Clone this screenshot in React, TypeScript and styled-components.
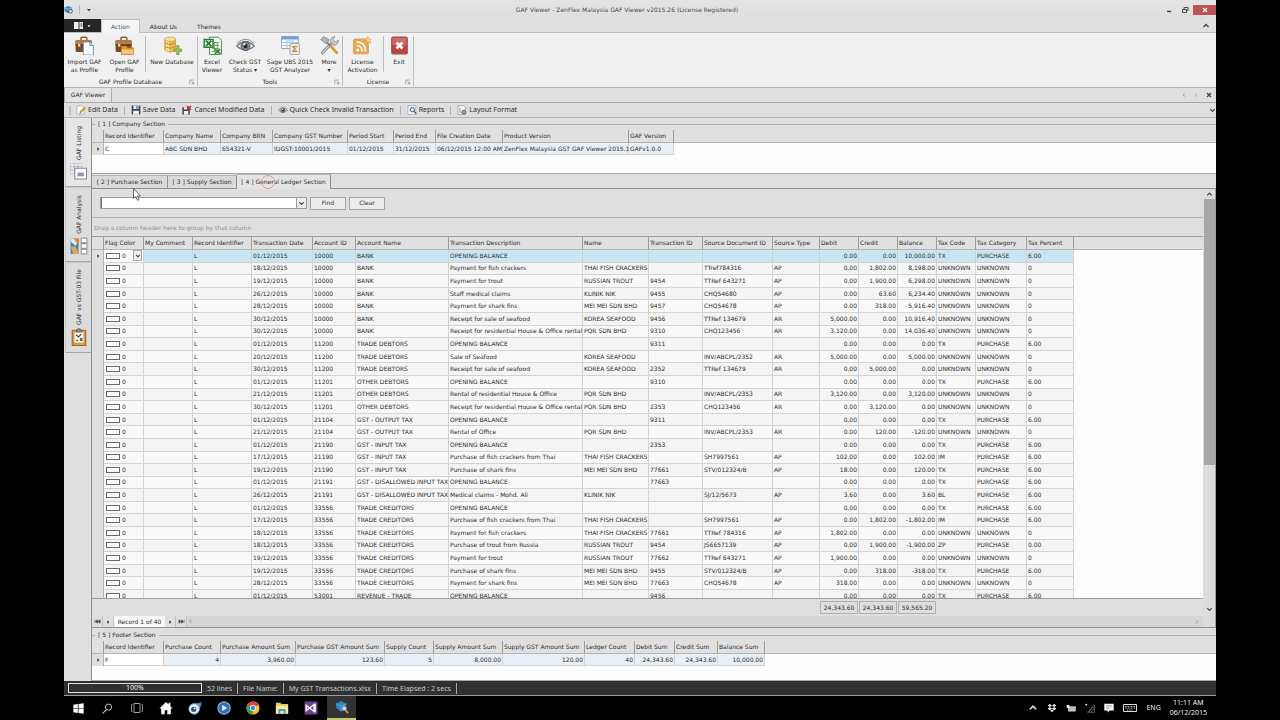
import React from "react";
import styled, { createGlobalStyle, css } from "styled-components";

const GlobalStyle = createGlobalStyle`
  * { box-sizing: border-box; }
  html, body { margin: 0; padding: 0; background: #000; }
  body, button, input, table { font-family: "DejaVu Sans", Verdana, sans-serif; font-size: 6px; line-height: 8px; color: #2c2c2c; }
  button { border: 0; padding: 0; margin: 0; background: none; }
  svg { display: block; }
`;

const segoe = `"Noto Sans", "Open Sans", sans-serif`;

const Screen = styled.div`
  display: flex;
  flex-direction: column;
  height: 100vh;
  padding: 0 5%;
  background: #000;
`;

const Window = styled.div`
  display: flex;
  flex-direction: column;
  flex: 1;
  min-height: 0;
  background: #dfdfdf;
`;

/* ---------- title bar ---------- */

const TitleBar = styled.header`
  display: grid;
  grid-template-columns: 1fr auto 1fr;
  align-items: center;
  height: 19px;
  flex: none;
  background: linear-gradient(#e4e4e4, #dedede);
`;

const QuickAccess = styled.div`
  display: flex;
  align-items: center;
  gap: 5px;
`;

const QuickSeparator = styled.span`
  width: 1px;
  height: 9px;
  background: #b5b5b5;
`;

const Title = styled.h1`
  margin: 0;
  padding-right: 26px;
  font-size: 6px;
  font-weight: 400;
  color: #484848;
`;

const WindowButtons = styled.div`
  display: flex;
  justify-content: flex-end;
  align-items: center;
`;

const WindowButton = styled.button<{ $close?: boolean }>`
  display: grid;
  place-items: center;
  width: ${(p) => (p.$close ? 23 : 16)}px;
  height: 10px;
  background: ${(p) => (p.$close ? "#bd5353" : "transparent")};
`;

/* ---------- ribbon ---------- */

const RibbonTabs = styled.nav`
  display: flex;
  height: 14px;
  flex: none;
  border-bottom: 1px solid #bdbdbd;
`;

const FileButton = styled.button`
  display: flex;
  align-items: center;
  justify-content: center;
  gap: 3px;
  width: 37px;
  height: 13px;
  background: #262626;
`;

const RibbonTab = styled.button<{ $active?: boolean }>`
  height: 14px;
  padding: 0 9px;
  border: 1px solid transparent;
  border-bottom: 0;
  ${(p) =>
    p.$active &&
    css`
      background: #f4f4f4;
      border-color: #bdbdbd;
      color: #3a5a86;
    `}
`;

const RibbonToggle = styled.button`
  margin-left: auto;
  padding-right: 6px;
`;

const Ribbon = styled.div`
  display: flex;
  height: 55px;
  flex: none;
  padding-top: 3px;
  background: #f0f0f0;
  border-bottom: 1px solid #b4b4b4;
`;

const RibbonGroup = styled.section`
  display: flex;
  flex-direction: column;
  height: 50px;
  border-right: 1px solid #bcbcbc;
`;

const RibbonItems = styled.div`
  display: flex;
  height: 38px;
`;

const RibbonSeparator = styled.span`
  width: 1px;
  height: 36px;
  margin: 0 1px;
  background: #bcbcbc;
`;

const RibbonButton = styled.button<{ $width: number }>`
  display: flex;
  flex-direction: column;
  align-items: center;
  gap: 3px;
  width: ${(p) => p.$width}px;
  white-space: nowrap;
  text-align: center;
`;

const RibbonCaption = styled.div`
  display: grid;
  grid-template-columns: 10px 1fr 10px;
  align-items: center;
  justify-items: center;
  height: 12px;
  padding-top: 4px;
`;

/* ---------- document tab and toolbar ---------- */

const DocumentTabs = styled.div`
  display: flex;
  align-items: center;
  height: 15px;
  flex: none;
  border-bottom: 1px solid #ababab;
`;

const DocumentTab = styled.button`
  width: 48px;
  height: 14px;
  border: 1px solid #ababab;
  border-top: 0;
  border-bottom: 0;
  background: #e4e4e4;
`;

const DocumentNav = styled.div`
  display: flex;
  align-items: center;
  gap: 6px;
  margin-left: auto;
  padding-right: 3px;
`;

const Toolbar = styled.div`
  display: flex;
  align-items: center;
  height: 15px;
  flex: none;
  padding: 0 0 0 5px;
  border-bottom: 1px solid #b4b4b4;
`;

const ToolGrip = styled.span`
  width: 2px;
  height: 9px;
  margin-right: 5px;
  background: #c0c0c0;
`;

const ToolButton = styled.button`
  display: flex;
  align-items: center;
  gap: 2px;
  padding-right: 5px;
  font-family: ${segoe};
  font-size: 7px;
  white-space: nowrap;
  & + & { margin-left: 2px; }
`;

const ToolSeparator = styled.span`
  width: 1px;
  height: 9px;
  margin: 0 6px 0 1px;
  background: #b0b0b0;
`;

const ToolOverflow = styled.button`
  margin-left: auto;
`;

/* ---------- workspace ---------- */

const Workspace = styled.div`
  display: flex;
  flex: 1;
  min-height: 0;
`;

const SideTabs = styled.nav`
  width: 27px;
  flex: none;
  padding-left: 1px;
`;

const SideTab = styled.button<{ $height: number; $active?: boolean }>`
  display: flex;
  flex-direction: column;
  align-items: center;
  justify-content: flex-end;
  gap: 3px;
  width: 26px;
  height: ${(p) => p.$height}px;
  padding-bottom: 6px;
  border: 1px solid #a8a8a8;
  border-left-color: #c8c8c8;
  border-right: 0;
  border-top-color: ${(p) => (p.$active ? "transparent" : "#c8c8c8")};
  background: ${(p) => (p.$active ? "#e6e6e6" : "#dcdcdc")};
`;

const SideLabel = styled.span`
  writing-mode: vertical-rl;
  transform: rotate(180deg);
  white-space: nowrap;
`;

const Content = styled.main`
  display: flex;
  flex-direction: column;
  flex: 1;
  min-width: 0;
  border-left: 1px solid #8f8f8f;
`;

const SectionLegend = styled.h2`
  display: flex;
  align-items: center;
  gap: 3px;
  height: 12px;
  flex: none;
  margin: 0;
  font-size: 6px;
  font-weight: 400;
  &::before { content: ""; width: 3px; height: 1px; background: #b0b0b0; }
  &::after { content: ""; flex: 1; height: 1px; background: #b0b0b0; }
`;

const SectionBody = styled.div<{ $height: number }>`
  height: ${(p) => p.$height}px;
  flex: none;
  background: #fdfdfd;
  border-bottom: 1px solid #a8a8a8;
`;

const GridTable = styled.table<{ $height?: number }>`
  table-layout: fixed;
  width: 100%;
  height: ${(p) => (p.$height ? p.$height + "px" : "auto")};
  border-collapse: separate;
  border-spacing: 0;
`;

const HeadCell = styled.th<{ $blank?: boolean }>`
  height: 13px;
  padding: 0 0 0 1px;
  border-right: 1px solid ${(p) => (p.$blank ? "#dfdfdf" : "#9c9c9c")};
  border-bottom: 1px solid #b4b4b4;
  background: #e0e0e0;
  font-weight: 400;
  text-align: left;
  white-space: nowrap;
`;

const Cell = styled.td<{ $right?: boolean; $tone?: "plain" | "info" }>`
  height: 12px;
  padding: 0 1px;
  border-right: 1px solid #d2d2d2;
  border-bottom: 1px solid #d2d2d2;
  text-align: ${(p) => (p.$right ? "right" : "left")};
  white-space: nowrap;
  ${(p) => p.$tone === "info" && "background: #e6f0f8;"}
  ${(p) => p.$tone === "plain" && "background: #fff;"}
`;

const MarkerCell = styled.td`
  padding: 0;
  border-right: 1px solid #b4b4b4;
  background: #dfdfdf;
  & > svg { margin: 0 auto; }
`;

const RestCell = styled.td`
  padding: 0;
  background: #fdfdfd;
`;

const LedgerRow = styled.tr<{ $selected?: boolean }>`
  background: #f9f9f9;
  &:nth-child(even) { background: #f4f4f4; }
  ${(p) => p.$selected && "&& { background: #cbe4f4; }"}
`;

const FlagBox = styled.div`
  display: flex;
  align-items: center;
  gap: 2px;
  padding-left: 1px;
`;

const Swatch = styled.span`
  width: 14px;
  height: 6px;
  border: 1px solid #6a6a6a;
  background: #fff;
`;

const FlagDrop = styled.button`
  display: grid;
  place-items: center;
  width: 9px;
  height: 11px;
  margin-left: auto;
  border: 1px solid #a8a8a8;
  background: #f0f0f0;
`;

/* ---------- section tabs ---------- */

const SectionTabs = styled.div`
  position: relative;
  display: flex;
  align-items: flex-end;
  height: 15px;
  flex: none;
  border-bottom: 1px solid #8f8f8f;
`;

const SectionTab = styled.button<{ $width: number; $active?: boolean }>`
  width: ${(p) => p.$width}px;
  height: ${(p) => (p.$active ? 15 : 13)}px;
  margin-bottom: ${(p) => (p.$active ? -1 : 0)}px;
  border-right: 1px solid #8f8f8f;
  border-top: 1px solid #b4b4b4;
  background: ${(p) => (p.$active ? "#e4e4e4" : "#dadada")};
  white-space: nowrap;
`;

const ClickRing = styled.span`
  position: absolute;
  left: 169px;
  top: 1px;
  width: 14px;
  height: 14px;
  border: 1px solid #dc9a9a;
  border-radius: 50%;
`;

const Pointer = styled.svg`
  position: absolute;
  left: 41px;
  top: 14px;
  z-index: 1;
`;

/* ---------- ledger ---------- */

const LedgerPane = styled.section`
  display: flex;
  flex: 1;
  min-height: 0;
  border-bottom: 1px solid #8f8f8f;
`;

const LedgerMain = styled.div`
  display: flex;
  flex-direction: column;
  flex: 1;
  min-width: 0;
`;

const FindBar = styled.form`
  display: flex;
  align-items: center;
  gap: 3px;
  height: 29px;
  flex: none;
  padding-left: 8px;
  border-bottom: 1px solid #b4b4b4;
`;

const ComboBox = styled.div`
  display: flex;
  width: 207px;
  height: 12px;
  border: 1px solid #9c9c9c;
  background: #fff;
`;

const ComboInput = styled.input`
  flex: 1;
  min-width: 0;
  padding: 0 2px;
  border: 0;
  border-left: 1px solid #777;
  outline: 0;
  background: transparent;
`;

const ComboDrop = styled.button`
  display: grid;
  place-items: center;
  width: 10px;
  border-left: 1px solid #9c9c9c;
  background: #eee;
`;

const FormButton = styled.button`
  width: 36px;
  height: 13px;
  border: 1px solid #a4a4a4;
  background: #ececec;
`;

const GroupHint = styled.p`
  height: 19px;
  flex: none;
  margin: 0;
  padding: 6px 2px 0;
  border-bottom: 1px solid #9c9c9c;
  color: #8e8e8e;
`;

const LedgerView = styled.div`
  flex: 1;
  min-height: 0;
  overflow: hidden;
  background: #fdfdfd;
  border-bottom: 1px solid #9c9c9c;
`;

const SummaryBar = styled.div`
  height: 17px;
  flex: none;
  padding-top: 2px;
`;

const SummaryCell = styled.td`
  height: 12px;
  padding: 0 1px 0 0;
  text-align: right;
`;

const SummaryValue = styled.output`
  display: block;
  height: 13px;
  line-height: 11px;
  border: 1px solid #b0b0b0;
  text-align: center;
`;

const Navigator = styled.div`
  display: flex;
  align-items: center;
  height: 11px;
  flex: none;
  background: #d5d5d5;
`;

const NavButton = styled.button`
  display: grid;
  place-items: center;
  width: 11px;
  height: 11px;
  border-right: 1px solid #c0c0c0;
  background: #dedede;
`;

const NavPosition = styled.span`
  width: 51px;
  line-height: 11px;
  background: #f8f8f8;
  text-align: center;
`;

const NavEnd = styled.span`
  margin-left: auto;
  padding-right: 3px;
`;

const ScrollBar = styled.div`
  display: flex;
  flex-direction: column;
  align-items: center;
  width: 13px;
  flex: none;
  padding: 2px 0 14px;
  border-right: 1px solid #a0a0a0;
  background: #dcdcdc;
`;

const ScrollThumb = styled.div`
  width: 11px;
  height: 63%;
  margin-top: 1px;
  margin-bottom: auto;
  background: #a8a8a8;
`;

const FooterSection = styled.section`
  flex: none;
  padding-top: 1px;
`;

/* ---------- status bar and taskbar ---------- */

const StatusBar = styled.footer`
  display: flex;
  align-items: center;
  height: 15px;
  flex: none;
  padding-left: 4px;
  border-bottom: 1px solid #9a9a9a;
  background: #303030;
  color: #c8c8c8;
  font-family: ${segoe};
  font-size: 7px;
`;

const Progress = styled.div`
  width: 134px;
  height: 10px;
  border: 1px solid #e0e0e0;
  color: #f0f0f0;
  line-height: 8px;
  text-align: center;
`;

const StatusItem = styled.span`
  padding: 0 5px;
  border-right: 1px solid #a8a8a8;
  line-height: 11px;
  white-space: nowrap;
`;

const TaskBar = styled.nav`
  display: flex;
  align-items: center;
  height: 24px;
  flex: none;
  color: #f0f0f0;
  font-family: ${segoe};
  font-size: 7px;
`;

const TaskButton = styled.button<{ $active?: boolean }>`
  display: grid;
  place-items: center;
  flex: none;
  width: 29px;
  height: 24px;
  ${(p) =>
    p.$active &&
    css`
      margin-left: 2px;
      background: #333;
      border-bottom: 2px solid #b9cf6d;
    `}
`;

const Tray = styled.div`
  display: flex;
  align-items: center;
  gap: 9px;
  margin-left: auto;
  padding-right: 9px;
`;

const Clock = styled.time`
  line-height: 10px;
  text-align: center;
`;

/* ---------- small glyphs ---------- */

type GlyphKind = "down" | "up" | "left" | "right" | "close" | "min" | "restore" | "next" | "prev" | "first" | "last" | "caret" | "launch";

const glyphPaths: Record<GlyphKind, React.ReactNode> = {
  down: <path d="M1.500 2.500 4 5l2.500-2.500" strokeWidth="1.400" />,
  up: <path d="M1.500 5 4 2.500 6.500 5" strokeWidth="1.400" />,
  left: <path d="M5 2 3 4l2 2" />,
  right: <path d="M3 2l2 2-2 2" />,
  close: <path d="M2 2l4 4M6 2 2 6" strokeWidth="1.300" />,
  min: <path d="M2 5.500h4" strokeWidth="1.500" />,
  restore: <path d="M1.500 3.500h4v3h-4zM3 3V1.500h4v3H6" />,
  next: <path d="M3 1.500v5L6 4z" fill="currentColor" stroke="none" />,
  prev: <path d="M5 1.500v5L2 4z" fill="currentColor" stroke="none" />,
  first: <path d="M1 2v4M4 2v4L1.500 4zM7 2v4L4.500 4z" fill="currentColor" strokeWidth=".6" />,
  last: <path d="M7 2v4M4 2v4l2.500-2zM1 2v4l2.500-2z" fill="currentColor" strokeWidth=".6" />,
  caret: <path d="M2 3h4L4 5.500z" fill="currentColor" stroke="none" />,
  launch: <path d="M1 7V1.500h5.500M6.500 3.500v3h-3M3.500 3.500l3 3" strokeWidth=".8" />,
};

function Glyph({ kind, size = 8, color = "#444" }: { kind: GlyphKind; size?: number; color?: string }) {
  return (
    <svg width={size} height={size} viewBox="0 0 8 8" fill="none" stroke="currentColor" color={color} aria-hidden="true">
      {glyphPaths[kind]}
    </svg>
  );
}

function Pic({ size = 19, children }: { size?: number; children: React.ReactNode }) {
  return (
    <svg width={size} height={size} viewBox="0 0 32 32" fill="none" aria-hidden="true">
      {children}
    </svg>
  );
}

/* ---------- ribbon pictures ---------- */

const Briefcase = () => (
  <>
    <path d="M10 8V4q0-2 2-2h6q2 0 2 2v4" stroke="#8b6038" strokeWidth="2.500" />
    <rect x="1" y="7" width="27" height="20" rx="2" fill="#79492a" />
    <path d="M1 9q0-2 2-2h23q2 0 2 2v6H1z" fill="#b67a45" />
    <path d="M1 15h27" stroke="#4d2e1b" strokeWidth="2" />
    <rect x="5" y="13" width="4" height="5" fill="#e6cf9a" />
  </>
);

const ImportPic = () => (
  <Pic>
    <Briefcase />
    <path d="M14 10h11l6 6v16H14z" fill="#f8fbff" stroke="#6f8fb8" strokeWidth="1.500" />
    <path d="M25 10v6h6" fill="#cfdff2" stroke="#6f8fb8" strokeWidth="1.500" />
  </Pic>
);

const OpenPic = () => (
  <Pic>
    <Briefcase />
    <path d="M11 17h8l2 3h10v11H11z" fill="#e59b3a" stroke="#b8701d" />
    <path d="M11 22h20v9H11z" fill="#f8c878" stroke="#c98430" />
  </Pic>
);

const DatabasePic = () => (
  <Pic>
    <path d="M3 5v19q9 6 18 0V5z" fill="#edbb50" stroke="#b98a2f" />
    <path d="M6 8v17M9 9v17" stroke="#fbe6a8" strokeWidth="2" />
    <ellipse cx="12" cy="5.500" rx="9" ry="3.500" fill="#fbe3a0" stroke="#b98a2f" />
    <path d="M3 12q9 5 18 0M3 18q9 5 18 0" stroke="#b98a2f" strokeWidth="1.500" />
    <path d="M23 16h4v6h5v4h-5v6h-4v-6h-5v-4h5z" fill="#9cc35e" stroke="#5c8a38" />
  </Pic>
);

const ExcelPic = () => (
  <Pic>
    <path d="M11 2h15l5 5v24H11z" fill="#f6fbf4" stroke="#3f7f3c" strokeWidth="1.500" />
    <path d="M15 11h12M15 16h12M15 21h12M15 26h12M19 11v16M24 11v16" stroke="#5f9c58" strokeWidth="1.500" />
    <path d="M2 6h15v13H2z" fill="#f4faf3" stroke="#2f7a37" strokeWidth="2.500" />
    <path d="m5 8 9 9M14 8l-9 9" stroke="#2f7a37" strokeWidth="3" />
    <path d="M20 22l9 8M29 22l-9 8" stroke="#2f8a3c" strokeWidth="3" />
  </Pic>
);

const Eye = () => (
  <>
    <path d="M1 17Q16 2 31 17 16 30 1 17z" fill="#e8e8ea" stroke="#6b6d73" strokeWidth="2" />
    <path d="M2 12Q16-1 30 12" stroke="#7b7d83" strokeWidth="1.500" />
    <circle cx="16" cy="17" r="7.500" fill="#7c8498" stroke="#4a4e5a" strokeWidth="1.500" />
    <circle cx="16" cy="17" r="3.500" fill="#22252c" />
    <circle cx="14" cy="14" r="1.800" fill="#fff" />
  </>
);

const SagePic = () => (
  <Pic>
    <rect x="1" y="1" width="28" height="20" fill="#fafcff" stroke="#7ba0cf" strokeWidth="1.500" />
    <path d="M1 1h28v5H1z" fill="#6f9ed8" />
    <path d="M1 11h28M1 16h28M10 6v15M20 6v15" stroke="#9bbbe0" strokeWidth="1.500" />
    <path d="M10 6h10v5H10z" fill="#c7dcf4" />
    <rect x="15" y="13" width="16" height="18" rx="1" fill="#f5eee2" stroke="#8ba0bd" strokeWidth="1.500" />
    <path d="M28 18h-8l4 4-4 4h8" stroke="#bd8a3c" strokeWidth="2.200" />
  </Pic>
);

const ToolsPic = () => (
  <Pic>
    <path d="M4 28 20 12" stroke="#8c8c8c" strokeWidth="5" strokeLinecap="round" />
    <path d="M4 28 20 12" stroke="#d2d2d2" strokeWidth="2" strokeLinecap="round" />
    <path d="M17 9q0-7 8-8l-3 5 4 4 5-3q0 8-8 9z" fill="#c8c8c8" stroke="#777" />
    <path d="M1 6 6 1l9 5-2 5-3 2z" fill="#b4b4b4" stroke="#6b6b6b" />
    <path d="m12 11 6 6" stroke="#777" strokeWidth="3" />
    <path d="m19 18 9 10" stroke="#dd9a3b" strokeWidth="5" strokeLinecap="round" />
  </Pic>
);

const LicensePic = () => (
  <Pic>
    <rect x="1" y="5" width="25" height="25" rx="2" fill="#eba650" stroke="#cd8838" />
    <circle cx="8" cy="24" r="2.500" fill="#fff" />
    <path d="M6 16q9 0 9 10M6 10q15 0 15 16" stroke="#fff" strokeWidth="2.800" />
    <path d="m25 1 2 4 4 0-3 3 2 4-5-2-4 2 1-4-3-3h4z" fill="#f8d27a" stroke="#d79a38" />
  </Pic>
);

const ExitPic = () => (
  <Pic>
    <rect x="3" y="2" width="26" height="28" rx="2" fill="#bd4240" stroke="#9a4a48" strokeWidth="2" />
    <path d="M4 3h24v12q-12 3-24 0z" fill="#cf6864" />
    <path d="m11 11 10 10M21 11 11 21" stroke="#fff" strokeWidth="4.500" />
  </Pic>
);

/* ---------- data ---------- */

const companyColumns = [60, 57, 52, 75, 46, 42, 67, 126, 45];
const companyHeads = ["Record Identifier", "Company Name", "Company BRN", "Company GST Number", "Period Start", "Period End", "File Creation Date", "Product Version", "GAF Version"];
const companyRow = ["C", "ABC SDN BHD", "654321-V", "IDGST:10001/2015", "01/12/2015", "31/12/2015", "06/12/2015 12:00 AM", "ZenFlex Malaysia GST GAF Viewer 2015.1", "GAFv1.0.0"];

const footerColumns = [60, 57, 75, 89, 49, 69, 82, 50, 40, 43, 47];
const footerHeads = ["Record Identifier", "Purchase Count", "Purchase Amount Sum", "Purchase GST Amount Sum", "Supply Count", "Supply Amount Sum", "Supply GST Amount Sum", "Ledger Count", "Debit Sum", "Credit Sum", "Balance Sum"];
const footerRow = ["F", "4", "3,960.00", "123.60", "5", "8,000.00", "120.00", "40", "24,343.60", "24,343.60", "10,000.00"];

const ledgerColumns = [40, 49, 59, 61, 43, 93, 134, 66, 54, 70, 47, 39, 39, 39, 39, 51, 47];
const ledgerHeads = ["Flag Color", "My Comment", "Record Identifier", "Transaction Date", "Account ID", "Account Name", "Transaction Description", "Name", "Transaction ID", "Source Document ID", "Source Type", "Debit", "Credit", "Balance", "Tax Code", "Tax Category", "Tax Percent"];

// date | account | account name | description | name | transaction | document | type | debit | credit | balance | code | category | percent
const ledgerRows = `01/12/2015|10000|BANK|OPENING BALANCE|||||0.00|0.00|10,000.00|TX|PURCHASE|6.00
18/12/2015|10000|BANK|Payment for fish crackers|THAI FISH CRACKERS||TTref784316|AP|0.00|1,802.00|8,198.00|UNKNOWN|UNKNOWN|0
19/12/2015|10000|BANK|Payment for trout|RUSSIAN TROUT|9454|TTRef 643271|AP|0.00|1,900.00|6,298.00|UNKNOWN|UNKNOWN|0
26/12/2015|10000|BANK|Staff medical claims|KLINIK NIK|9455|CHQ54680|AP|0.00|63.60|6,234.40|UNKNOWN|UNKNOWN|0
28/12/2015|10000|BANK|Payment for shark fins|MEI MEI SDN BHD|9457|CHQ54678|AP|0.00|318.00|5,916.40|UNKNOWN|UNKNOWN|0
30/12/2015|10000|BANK|Receipt for sale of seafood|KOREA SEAFOOD|9456|TTRef 134679|AR|5,000.00|0.00|10,916.40|UNKNOWN|UNKNOWN|0
30/12/2015|10000|BANK|Receipt for residential House & Office rental|PQR SDN BHD|9310|CHQ123456|AR|3,120.00|0.00|14,036.40|UNKNOWN|UNKNOWN|0
01/12/2015|11200|TRADE DEBTORS|OPENING BALANCE||9311|||0.00|0.00|0.00|TX|PURCHASE|6.00
20/12/2015|11200|TRADE DEBTORS|Sale of Seafood|KOREA SEAFOOD||INV/ABCPL/2352|AR|5,000.00|0.00|5,000.00|UNKNOWN|UNKNOWN|0
30/12/2015|11200|TRADE DEBTORS|Receipt for sale of seafood|KOREA SEAFOOD|2352|TTRef 134679|AR|0.00|5,000.00|0.00|UNKNOWN|UNKNOWN|0
01/12/2015|11201|OTHER DEBTORS|OPENING BALANCE||9310|||0.00|0.00|0.00|TX|PURCHASE|6.00
21/12/2015|11201|OTHER DEBTORS|Rental of residential House & Office|PQR SDN BHD||INV/ABCPL/2353|AR|3,120.00|0.00|3,120.00|UNKNOWN|UNKNOWN|0
30/12/2015|11201|OTHER DEBTORS|Receipt for residential House & Office rental|PQR SDN BHD|2353|CHQ123456|AR|0.00|3,120.00|0.00|UNKNOWN|UNKNOWN|0
01/12/2015|21104|GST - OUTPUT TAX|OPENING BALANCE||9311|||0.00|0.00|0.00|TX|PURCHASE|6.00
21/12/2015|21104|GST - OUTPUT TAX|Rental of Office|PQR SDN BHD||INV/ABCPL/2353|AR|0.00|120.00|-120.00|UNKNOWN|UNKNOWN|0
01/12/2015|21190|GST - INPUT TAX|OPENING BALANCE||2353|||0.00|0.00|0.00|TX|PURCHASE|6.00
17/12/2015|21190|GST - INPUT TAX|Purchase of fish crackers from Thai|THAI FISH CRACKERS||SH7997561|AP|102.00|0.00|102.00|IM|PURCHASE|6.00
19/12/2015|21190|GST - INPUT TAX|Purchase of shark fins|MEI MEI SDN BHD|77661|STV/012324/B|AP|18.00|0.00|120.00|TX|PURCHASE|6.00
01/12/2015|21191|GST - DISALLOWED INPUT TAX|OPENING BALANCE||77663|||0.00|0.00|0.00|TX|PURCHASE|6.00
26/12/2015|21191|GST - DISALLOWED INPUT TAX|Medical claims - Mohd. Ali|KLINIK NIK||SJ/12/5673|AP|3.60|0.00|3.60|BL|PURCHASE|6.00
01/12/2015|33556|TRADE CREDITORS|OPENING BALANCE|||||0.00|0.00|0.00|TX|PURCHASE|6.00
17/12/2015|33556|TRADE CREDITORS|Purchase of fish crackers from Thai|THAI FISH CRACKERS||SH7997561|AP|0.00|1,802.00|-1,802.00|IM|PURCHASE|6.00
18/12/2015|33556|TRADE CREDITORS|Payment for fish crackers|THAI FISH CRACKERS|77661|TTRef 784316|AP|1,802.00|0.00|0.00|UNKNOWN|UNKNOWN|0
18/12/2015|33556|TRADE CREDITORS|Purchase of trout from Russia|RUSSIAN TROUT|9454|JS6657139|AP|0.00|1,900.00|-1,900.00|ZP|PURCHASE|0.00
19/12/2015|33556|TRADE CREDITORS|Payment for trout|RUSSIAN TROUT|77662|TTRef 643271|AP|1,900.00|0.00|0.00|UNKNOWN|UNKNOWN|0
19/12/2015|33556|TRADE CREDITORS|Purchase of shark fins|MEI MEI SDN BHD|9455|STV/012324/B|AP|0.00|318.00|-318.00|TX|PURCHASE|6.00
28/12/2015|33556|TRADE CREDITORS|Payment for shark fins|MEI MEI SDN BHD|77663|CHQ54678|AP|318.00|0.00|0.00|UNKNOWN|UNKNOWN|0
01/12/2015|53001|REVENUE - TRADE|OPENING BALANCE||9456|||0.00|0.00|0.00|TX|PURCHASE|6.00`
  .split("\n")
  .map((line) => line.split("|"));

function Columns({ widths }: { widths: number[] }) {
  return (
    <colgroup>
      <col width={12} />
      {widths.map((w, i) => (
        <col key={i} width={w} />
      ))}
      <col />
    </colgroup>
  );
}

function GridHead({ heads }: { heads: string[] }) {
  return (
    <thead>
      <tr>
        <HeadCell />
        {heads.map((h) => (
          <HeadCell key={h} scope="col">{h}</HeadCell>
        ))}
        <HeadCell $blank />
      </tr>
    </thead>
  );
}

function RecordTable({ label, widths, heads, values, numeric }: { label: string; widths: number[]; heads: string[]; values: string[]; numeric?: boolean }) {
  return (
    <GridTable aria-label={label}>
      <Columns widths={widths} />
      <GridHead heads={heads} />
      <tbody>
        <tr>
          <MarkerCell><Glyph kind="next" size={6} /></MarkerCell>
          {values.map((v, i) => (
            <Cell key={i} $right={numeric && i > 0} $tone={i ? "info" : "plain"}>{v}</Cell>
          ))}
          <RestCell />
        </tr>
      </tbody>
    </GridTable>
  );
}

function LedgerTable() {
  return (
    <GridTable $height={366} aria-label="General Ledger Section">
      <Columns widths={ledgerColumns} />
      <GridHead heads={ledgerHeads} />
      <tbody>
        {ledgerRows.map((row, r) => (
          <LedgerRow key={r} $selected={r === 0}>
            <MarkerCell>{r === 0 && <Glyph kind="next" size={6} />}</MarkerCell>
            <Cell $tone={r === 0 ? "plain" : undefined}>
              <FlagBox>
                <Swatch />0
                {r === 0 && (
                  <FlagDrop type="button" aria-label="Choose flag color"><Glyph kind="down" size={6} /></FlagDrop>
                )}
              </FlagBox>
            </Cell>
            <Cell />
            <Cell>L</Cell>
            {row.map((v, i) => (
              <Cell key={i} $right={i >= 8 && i <= 10}>{v}</Cell>
            ))}
            <RestCell />
          </LedgerRow>
        ))}
      </tbody>
    </GridTable>
  );
}

function RibbonBar() {
  return (
    <Ribbon>
      <RibbonGroup>
        <RibbonItems>
          <RibbonButton $width={41}><ImportPic /><span>Import GAF<br />as Profile</span></RibbonButton>
          <RibbonButton $width={39}><OpenPic /><span>Open GAF<br />Profile</span></RibbonButton>
          <RibbonSeparator />
          <RibbonButton $width={50}><DatabasePic /><span>New Database</span></RibbonButton>
        </RibbonItems>
        <RibbonCaption><span /><span>GAF Profile Database</span><Glyph kind="launch" size={6} color="#777" /></RibbonCaption>
      </RibbonGroup>
      <RibbonGroup>
        <RibbonItems>
          <RibbonButton $width={28}><ExcelPic /><span>Excel<br />Viewer</span></RibbonButton>
          <RibbonButton $width={38}><Pic><Eye /></Pic><span>Check GST<br />Status ▾</span></RibbonButton>
          <RibbonButton $width={52}><SagePic /><span>Sage UBS 2015<br />GST Analyzer</span></RibbonButton>
          <RibbonButton $width={26}><ToolsPic /><span>More<br />▾</span></RibbonButton>
        </RibbonItems>
        <RibbonCaption><span /><span>Tools</span><Glyph kind="launch" size={6} color="#777" /></RibbonCaption>
      </RibbonGroup>
      <RibbonGroup>
        <RibbonItems>
          <RibbonButton $width={39}><LicensePic /><span>License<br />Activation</span></RibbonButton>
          <RibbonSeparator />
          <RibbonButton $width={28}><ExitPic /><span>Exit</span></RibbonButton>
        </RibbonItems>
        <RibbonCaption><span /><span>License</span><Glyph kind="launch" size={6} color="#777" /></RibbonCaption>
      </RibbonGroup>
    </Ribbon>
  );
}

function ToolStrip() {
  return (
    <Toolbar role="toolbar">
      <ToolGrip />
      <ToolButton>
        <Pic size={10}><path d="M3 3h18l5 5v21H3z" fill="#fff" stroke="#999" strokeWidth="2" /><path d="m12 27 3-9L27 6l4 4-12 12z" fill="#d9b83e" stroke="#8a7a3a" strokeWidth="2" /></Pic>
        Edit Data
      </ToolButton>
      <ToolSeparator />
      <ToolButton>
        <Pic size={10}><path d="M2 2h28v28H2z" fill="#3d4a5c" /><path d="M8 2h16v11H8zM7 18h18v12H7z" fill="#eef2f6" /><path d="M17 4h4v7h-4z" fill="#3d4a5c" /></Pic>
        Save Data
      </ToolButton>
      <ToolButton>
        <Pic size={10}><path d="M1 7h24v24H1z" fill="#4a4450" /><path d="M6 19h14v12H6zM6 7h10v7H6z" fill="#eee" /><path d="m16 3 13 13M29 3 16 16" stroke="#b8343a" strokeWidth="5" /></Pic>
        Cancel Modified Data
      </ToolButton>
      <ToolSeparator />
      <ToolButton><Pic size={10}><Eye /></Pic>Quick Check Invalid Transaction</ToolButton>
      <ToolSeparator />
      <ToolButton>
        <Pic size={10}><path d="M3 2h25v28H3z" fill="#f7faff" stroke="#8b97a8" strokeWidth="2" /><circle cx="17" cy="15" r="7" fill="#cfe0f4" stroke="#3f6391" strokeWidth="3" /><path d="m22 20 8 9" stroke="#3f6391" strokeWidth="4" /></Pic>
        Reports
      </ToolButton>
      <ToolSeparator />
      <ToolButton>
        <Pic size={10}><path d="M3 2h20l5 5v23H3z" fill="#f7f7f7" stroke="#888" strokeWidth="2" /><path d="M9 8v15h6" stroke="#777" strokeWidth="2" /><circle cx="22" cy="23" r="6" fill="#aaa" stroke="#555" strokeWidth="3" /></Pic>
        Layout Format
      </ToolButton>
      <ToolOverflow aria-label="More tools"><Glyph kind="down" size={7} /></ToolOverflow>
    </Toolbar>
  );
}

function SideNav() {
  return (
    <SideTabs>
      <SideTab $height={69} $active>
        <SideLabel>GAF Listing</SideLabel>
        <Pic size={17}><path d="M1 1h21v19H1z" fill="#f4f4f4" stroke="#aaa" /><path d="M1 7h21M1 13h21M8 1v19M15 1v19" stroke="#aaa" strokeWidth="1.500" /><path d="M9 10h22v20H9z" fill="#fdfdfd" stroke="#7f8a9c" strokeWidth="2" /><path d="M14 18h12v7H14z" fill="#8d98b0" /></Pic>
      </SideTab>
      <SideTab $height={75}>
        <SideLabel>GAF Analysis</SideLabel>
        <Pic size={18}><path d="M1 2h14v28H1z" fill="#3e86b8" /><path d="M1 2h15L10 16 1 8z" fill="#dce9f2" /><path d="M6 2h10v14z" fill="#e6833c" /><path d="M1 17l9 0 6 13H6z" fill="#e9a05c" /><path d="M20 2h10v8H20zM20 12h10v8H20zM20 22h10v8H20z" fill="#fff" stroke="#999" strokeWidth="2" /></Pic>
      </SideTab>
      <SideTab $height={91}>
        <SideLabel>GAF vs GST-03 File</SideLabel>
        <Pic size={18}><path d="M4 4h24v27H4z" fill="#d79a45" stroke="#996a2b" strokeWidth="2" /><path d="M8 8h16v18H8z" fill="#fbf7ee" /><path d="M11 7q0-6 5-6t5 6z" fill="#888" stroke="#555" /><path d="m11 12 4 4 5-5M11 22h3M18 18l4 5M22 18l-4 5" stroke="#444" strokeWidth="2" /></Pic>
      </SideTab>
    </SideTabs>
  );
}

function WindowsTaskbar() {
  return (
    <TaskBar aria-label="Taskbar">
      <TaskButton aria-label="Start"><Pic size={11}><path d="M1 5l13-2v12H1zM16 3l15-2v14H16zM1 17h13v12L1 27zM16 17h15v14l-15-2z" fill="#fff" /></Pic></TaskButton>
      <TaskButton aria-label="Search"><Pic size={11}><circle cx="19" cy="12" r="9" stroke="#ddd" strokeWidth="2.500" /><path d="M13 19 2 30" stroke="#ddd" strokeWidth="3" /></Pic></TaskButton>
      <TaskButton aria-label="Task view"><Pic size={12}><path d="M8 4h16v24H8zM4 7H1v18h3M28 7h3v18h-3" stroke="#ccc" strokeWidth="2" /></Pic></TaskButton>
      <TaskButton aria-label="Home"><Pic size={14}><path d="M16 2 1 17h4v13h8v-9h6v9h8V17h4l-5-5V4h-4v4z" fill="#fff" /></Pic></TaskButton>
      <TaskButton aria-label="Capture"><Pic size={14}><path d="M16 5q9 1 15-3-1 13-7 16z" fill="#4a93c9" /><circle cx="14" cy="18" r="12" fill="#e4eff6" stroke="#7db0d4" strokeWidth="2" /><circle cx="13" cy="19" r="6" fill="#2c5674" /><circle cx="15" cy="17" r="2" fill="#fff" /></Pic></TaskButton>
      <TaskButton aria-label="Player"><Pic size={14}><circle cx="16" cy="16" r="14" fill="#2f6fc0" stroke="#8aa8c8" strokeWidth="3" /><path d="M12 9v14l11-7z" fill="#fff" /></Pic></TaskButton>
      <TaskButton aria-label="Chrome"><Pic size={14}><circle cx="16" cy="16" r="15" fill="#f2c230" /><path d="M16 16 3 8.500A15 15 0 0 1 29 8.500z" fill="#d9483b" /><path d="M16 16 3 8.500A15 15 0 0 0 15 31z" fill="#3f9d4e" /><circle cx="16" cy="16" r="7" fill="#fff" /><circle cx="16" cy="16" r="5" fill="#4583dd" /></Pic></TaskButton>
      <TaskButton aria-label="File Explorer"><Pic size={14}><path d="M2 4h10l3 3h15v22H2z" fill="#edc95c" /><path d="M2 11h28v18H2z" fill="#f8e6a0" /><path d="M8 29V18h16v11h-4v-6h-8v6z" fill="#4a9bd0" /></Pic></TaskButton>
      <TaskButton aria-label="Visual Studio"><Pic size={14}><path d="M1 1h30v30H1z" fill="#68408c" /><path d="m5 10 18 14V8L5 22z" stroke="#fff" strokeWidth="3" /><path d="m23 5 4 2v18l-4 2z" fill="#fff" /></Pic></TaskButton>
      <TaskButton aria-label="GAF Viewer" $active><Pic size={14}><path d="m2 8 12-6 12 7-1 13-11 4L3 19z" fill="#2f85c4" /><path d="m2 8 12 6 12-5M14 14v12" stroke="#5aa6d6" strokeWidth="2" /><circle cx="21" cy="19" r="5" fill="#cfe3f0" stroke="#888" strokeWidth="2" /><path d="m24 23 6 7" stroke="#d8924a" strokeWidth="4" /></Pic></TaskButton>
      <Tray>
        <Glyph kind="up" size={10} color="#ddd" />
        <Pic size={10}><path d="m9 3 7 5-7 5-7-5zM23 3l7 5-7 5-7-5zM9 13l7 5-7 5-7-5zM23 13l7 5-7 5-7-5zM16 21l6 4-6 4-6-4z" fill="#eee" /></Pic>
        <Pic size={10}><path d="M8 12h22v14H8z" fill="#bbb" stroke="#eee" strokeWidth="2" /><path d="M2 6v8q4 5 9 0V6z" fill="#eee" /></Pic>
        <Pic size={10}><path d="M8 30 30 6v24zM14 30A16 16 0 0 1 30 14M20 30a10 10 0 0 1 10-10" stroke="#888" strokeWidth="2" /><circle cx="4" cy="5" r="3" fill="#fff" /></Pic>
        <Pic size={10}><path d="M1 2h30v22H18l-6 7v-7H1z" fill="#fff" /><path d="M6 9h20M6 16h14" stroke="#555" strokeWidth="2" /></Pic>
        <svg width="14" height="10" viewBox="0 0 28 20" fill="none" aria-hidden="true"><path d="M1 3h26v14H1z" stroke="#ddd" strokeWidth="2" /><path d="M4 7h20M4 10h20M8 14h12" stroke="#ddd" strokeWidth="1.500" strokeDasharray="2 1" /></svg>
        <span>ENG</span>
        <Clock>11:11 AM<br />06/12/2015</Clock>
      </Tray>
    </TaskBar>
  );
}

export default function App() {
  return (
    <Screen>
      <GlobalStyle />
      <Window>
        <TitleBar>
          <QuickAccess>
            <Pic size={10}><path d="m1 8 13-5 12 6-1 13-12 4-11-6z" fill="#3a83b8" /><path d="m1 8 12 6 13-5" stroke="#d4e7f4" strokeWidth="2" /><circle cx="21" cy="20" r="6" fill="#dfeaf2" stroke="#456" strokeWidth="3" /></Pic>
            <QuickSeparator />
            <Glyph kind="caret" size={8} />
          </QuickAccess>
          <Title>GAF Viewer - ZenFlex Malaysia GAF Viewer v2015.26 (License Registered)</Title>
          <WindowButtons>
            <WindowButton aria-label="Minimize"><Glyph kind="min" /></WindowButton>
            <WindowButton aria-label="Restore"><Glyph kind="restore" /></WindowButton>
            <WindowButton aria-label="Close" $close><Glyph kind="close" color="#fff" /></WindowButton>
          </WindowButtons>
        </TitleBar>
        <RibbonTabs>
          <FileButton aria-label="Application menu">
            <svg width="9" height="7" viewBox="0 0 9 7" aria-hidden="true"><path d="M0 0h9v7H0z" fill="#eee" /><path d="M5 0v7M6.500 2h2M6.500 4h2" stroke="#333" /></svg>
            <Glyph kind="caret" size={6} color="#fff" />
          </FileButton>
          <RibbonTab $active>Action</RibbonTab>
          <RibbonTab>About Us</RibbonTab>
          <RibbonTab>Themes</RibbonTab>
          <RibbonToggle aria-label="Collapse ribbon"><Glyph kind="up" /></RibbonToggle>
        </RibbonTabs>
        <RibbonBar />
        <DocumentTabs>
          <DocumentTab>GAF Viewer</DocumentTab>
          <DocumentNav>
            <Glyph kind="left" size={6} color="#888" />
            <Glyph kind="right" size={6} color="#888" />
            <Glyph kind="close" size={8} />
          </DocumentNav>
        </DocumentTabs>
        <ToolStrip />
        <Workspace>
          <SideNav />
          <Content>
            <SectionLegend>[ 1 ] Company Section</SectionLegend>
            <SectionBody $height={44}>
              <RecordTable label="Company Section" widths={companyColumns} heads={companyHeads} values={companyRow} />
            </SectionBody>
            <SectionTabs>
              <SectionTab $width={76}>[ 2 ] Purchase Section</SectionTab>
              <SectionTab $width={69}>[ 3 ] Supply Section</SectionTab>
              <SectionTab $width={94} $active>[ 4 ] General Ledger Section</SectionTab>
              <ClickRing />
              <Pointer width="8" height="13" viewBox="0 0 8 13" aria-hidden="true"><path d="M.5.500v10l2.300-2 1.700 3.800 1.500-.7L4.400 8h3z" fill="#fff" stroke="#444" strokeWidth=".8" /></Pointer>
            </SectionTabs>
            <LedgerPane>
              <LedgerMain>
                <FindBar onSubmit={(e) => e.preventDefault()}>
                  <ComboBox>
                    <ComboInput type="text" aria-label="Search text" />
                    <ComboDrop type="button" aria-label="Recent searches"><Glyph kind="down" size={7} /></ComboDrop>
                  </ComboBox>
                  <FormButton type="submit">Find</FormButton>
                  <FormButton type="reset">Clear</FormButton>
                </FindBar>
                <GroupHint>Drag a column header here to group by that column</GroupHint>
                <LedgerView><LedgerTable /></LedgerView>
                <SummaryBar>
                  <GridTable aria-label="Ledger totals">
                    <Columns widths={ledgerColumns} />
                    <tbody>
                      <tr>
                        <SummaryCell colSpan={12} />
                        {["24,343.60", "24,343.60", "59,565.20"].map((v, i) => (
                          <SummaryCell key={i}><SummaryValue>{v}</SummaryValue></SummaryCell>
                        ))}
                        <SummaryCell colSpan={4} />
                      </tr>
                    </tbody>
                  </GridTable>
                </SummaryBar>
                <Navigator>
                  <NavButton aria-label="First record"><Glyph kind="first" size={7} /></NavButton>
                  <NavButton aria-label="Previous record"><Glyph kind="prev" size={6} /></NavButton>
                  <NavPosition>Record 1 of 40</NavPosition>
                  <NavButton aria-label="Next record"><Glyph kind="next" size={6} /></NavButton>
                  <NavButton aria-label="Last record"><Glyph kind="last" size={7} /></NavButton>
                  <Glyph kind="left" size={7} color="#888" />
                  <NavEnd><Glyph kind="right" size={6} color="#888" /></NavEnd>
                </Navigator>
              </LedgerMain>
              <ScrollBar>
                <Glyph kind="up" size={7} />
                <ScrollThumb />
                <Glyph kind="down" size={7} />
              </ScrollBar>
            </LedgerPane>
            <FooterSection>
              <SectionLegend>[ 5 ] Footer Section</SectionLegend>
              <SectionBody $height={40}>
                <RecordTable label="Footer Section" widths={footerColumns} heads={footerHeads} values={footerRow} numeric />
              </SectionBody>
            </FooterSection>
          </Content>
        </Workspace>
        <StatusBar>
          <Progress role="progressbar" aria-valuenow={100}>100%</Progress>
          <StatusItem>52 lines</StatusItem>
          <StatusItem>File Name:</StatusItem>
          <StatusItem>My GST Transactions.xlsx</StatusItem>
          <StatusItem>Time Elapsed : 2 secs</StatusItem>
        </StatusBar>
      </Window>
      <WindowsTaskbar />
    </Screen>
  );
}
